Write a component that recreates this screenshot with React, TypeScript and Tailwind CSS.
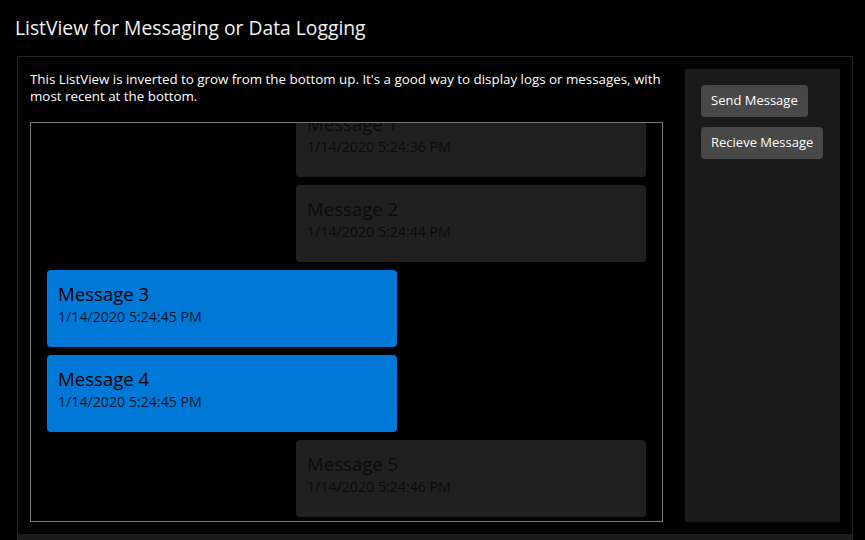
const MESSAGES = [
    { title: "Message 1", time: "1/14/2020 5:24:36 PM", mine: false },
    { title: "Message 2", time: "1/14/2020 5:24:44 PM", mine: false },
    { title: "Message 3", time: "1/14/2020 5:24:45 PM", mine: true },
    { title: "Message 4", time: "1/14/2020 5:24:45 PM", mine: true },
    { title: "Message 5", time: "1/14/2020 5:24:46 PM", mine: false },
];

function MessageCard({ title, time, mine }: { title: string; time: string; mine: boolean }) {
    return (
        <div
            className={
                mine
                    ? "self-start w-[350px] h-[77px] shrink-0 rounded-[4px] bg-[#0078d7] px-[11px] pt-[12px] text-black"
                    : "self-end w-[350px] h-[77px] shrink-0 rounded-[4px] bg-[#202020] px-[11px] pt-[12px] text-[#0b0b0b]"
            }
        >
            <div className="text-[18.6px] leading-[24px]">{title}</div>
            <div className={mine ? "mt-[1px] text-[14.2px] leading-[20px] text-black/85" : "mt-[1px] text-[14.2px] leading-[20px]"}>
                {time}
            </div>
        </div>
    );
}

export default function App() {
    return (
        <div
            className="h-[540px] w-[865px] overflow-hidden bg-black text-white"
            style={{ fontFamily: '"Open Sans", "Noto Sans", sans-serif' }}
        >
            {/* Page title */}
            <div className="flex h-[56px] items-center px-[15px] pb-[1px]">
                <h1 className="text-[19.3px] leading-[28px] text-[#f2f2f2]">ListView for Messaging or Data Logging</h1>
            </div>

            {/* Example panel */}
            <div className="ml-[17px] w-[836px] border border-[#262626]">
                <div className="flex gap-[22px] p-[12px]">
                    <div className="w-[633px] shrink-0">
                        <p className="pt-[2px] mb-[17px] whitespace-nowrap text-[13.35px] leading-[17px] text-white">
                            This ListView is inverted to grow from the bottom up. It's a good way to display logs or messages, with
                            <br />
                            most recent at the bottom.
                        </p>

                        {/* Inverted list */}
                        <div className="flex h-[400px] flex-col justify-end gap-[8px] overflow-hidden border border-[#7a7a7a] px-[16px] pb-[4px]">
                            {MESSAGES.map((m) => (
                                <MessageCard key={m.title} {...m} />
                            ))}
                        </div>
                    </div>

                    <div className="flex w-[155px] shrink-0 flex-col items-start gap-[10px] bg-[#1a1a1a] p-[16px]">
                        <button className="h-[32px] whitespace-nowrap rounded-[4px] bg-[#484848] px-[10px] text-[13px] text-white">
                            Send Message
                        </button>
                        <button className="h-[32px] whitespace-nowrap rounded-[4px] bg-[#484848] px-[10px] text-[13px] text-white">
                            Recieve Message
                        </button>
                    </div>
                </div>
                <div className="h-[40px] bg-[#1c1c1c]" />
            </div>
        </div>
    );
}
